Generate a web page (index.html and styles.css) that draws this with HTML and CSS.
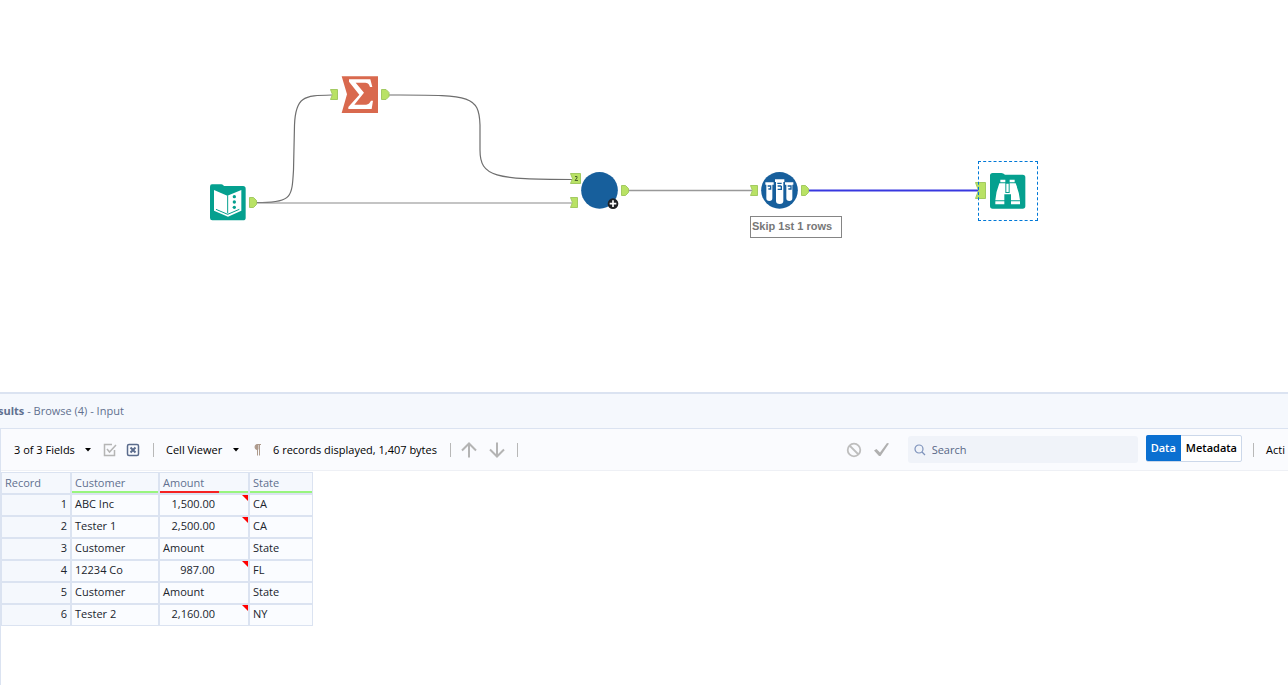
FILE: index.html
```html
<!DOCTYPE html>
<html lang="en">
<head>
<meta charset="utf-8">
<title>Workflow results</title>
<link rel="stylesheet" href="styles.css">
</head>
<body>
<main class="canvas" aria-label="Workflow canvas">
  <svg class="wires" width="1288" height="390" fill="none" stroke="#6e6e6e" stroke-width="1.2">
    <path d="M256 202.500H262C292 202.500 292 196 293.500 170L294.500 125C295.500 97 303 95.500 332 95"/>
    <path d="M388 95H400C470 95 479 96 480 125V150C480 177 495 179.500 572 179.500"/>
    <path d="M256 203H572" stroke="#8a8a8a"/>
    <path d="M628 190.500H752" stroke="#999" stroke-width="1.500"/>
    <path d="M808 190.500H979" stroke="#3838e0" stroke-width="2"/>
  </svg>
  <svg class="wires" width="1288" height="390" fill="#b9e265" stroke="#a3ca62" stroke-width="1">
    <path d="M249.500 197.500h4l3 3v4l-3 3h-4z"/>
    <path d="M330.500 89.500h7v10h-7l2-5z"/>
    <path d="M381.500 89.500h4.500l3 3v4l-3 3h-4.500z"/>
    <path d="M570.500 173.500h10v10h-10l2-5z"/>
    <path d="M570.500 197.500h7v10h-7l2-5z"/>
    <path d="M621.500 185.500h4l3 3v4l-3 3h-4z"/>
    <path d="M750.500 185.500h7v10h-7l2-5z"/>
    <path d="M801.500 185.500h4l3 3v4l-3 3h-4z"/>
    <path d="M975.500 182.500h10v16h-10l3-8z"/>
    <path d="M575 176.500h2v1.500l-2 2.500h3" stroke="#4d652d" fill="none"/>
  </svg>

  <svg class="node input" viewBox="27 39 114 114" width="38" height="38" role="img" aria-label="Text input">
    <path fill="#05a08f" d="M36 43h28q5 0 8 5l3 0h54q8 0 8 8v88q0 7-8 7H37q-7 0-7-7V50q0-7 6-7z"/>
    <path fill="#fff" d="M42 60 82 77 124 60V122L84 140 42 122z"/>
    <g fill="none" stroke="#05a08f"><path stroke-width="3" d="M83 76V130M48 118 83 133 118 118"/></g>
    <g fill="#05a08f"><circle cx="103" cy="80" r="5"/><circle cx="103" cy="96" r="5"/><circle cx="103" cy="112" r="5"/></g>
  </svg>
  <svg class="node summarize" viewBox="63 30 114 114" width="38" height="38" role="img" aria-label="Summarize">
    <path fill="#d9694e" d="M65 34H174V144H65L81 88z"/>
    <path fill="#fff" d="M87 43H151L157 66H150C147 56 144 53 132 53H107L132 83 103 119H134C146 119 149 114 153 107H159L155 132H85V126L118 89 87 50z"/>
  </svg>
  <svg class="node union" viewBox="60 33 117 117" width="39" height="39" role="img" aria-label="Union">
    <circle cx="118.500" cy="91" r="55" fill="#175f9c"/>
    <circle cx="159" cy="131" r="16" fill="#202124"/>
    <path d="M149 131H169M159 121V141" stroke="#fff" stroke-width="5"/>
  </svg>
  <svg class="node sample" viewBox="60 33 117 117" width="39" height="39" role="img" aria-label="Sample">
    <circle cx="118.500" cy="91" r="55" fill="#175f9c"/>
    <g fill="#fff">
      <path d="M76 67H101V74H97V115Q97 123 88 123T79 115V74H76z"/>
      <path d="M105 58H133V66H130V123Q130 132 119 132T108 123V66H105z"/>
      <path d="M135 67H160V74H157V115Q157 123 148 123T139 115V74H135z"/>
    </g>
    <g fill="none" stroke="#175f9c" stroke-width="4">
      <path d="M83 78H92V87H85M112 70H125M113 78H124M113 88H124V78M143 78H153V87H145"/>
    </g>
  </svg>
  <p class="annotation">Skip 1st 1 rows</p>
  <div class="selection">
    <svg viewBox="72 64 114 114" width="38" height="38" role="img" aria-label="Browse">
      <path fill="#05a08f" d="M83 67H109Q115 67 120 72H173Q181 72 181 80V167Q181 174 173 174H83Q75 174 75 166V75Q75 67 83 67z"/>
      <g fill="#fff">
        <path d="M106 87H121V95H106zM134 87H149V95H134z"/>
        <path d="M103 98H121V127H134V98H152Q163 126 165 149H138V131H118V149H91Q93 123 103 98z"/>
        <path d="M91 152H118V161H91zM138 152H165V161H138zM124 99H131V124H124z"/>
      </g>
    </svg>
  </div>
</main>

<section class="results">
  <header class="title"><strong>sults</strong> <span>- Browse (4) - Input</span></header>
  <div class="panel">
    <div class="toolbar">
      <div class="group">
        <label class="pick"><select aria-label="Fields"><option>3 of 3 Fields</option></select><svg width="6" height="4" viewBox="0 0 6 4"><path d="M0 0h6L3 3.500z"/></svg></label>
        <button class="icon" aria-label="Select all"><svg width="14" height="14" viewBox="0 0 14 14" fill="none" stroke="#b5b5b5" stroke-width="1.500"><path d="M9 1.500H1.500v11h10V7M4 6l2.500 3L13 2"/></svg></button>
        <button class="icon" aria-label="Deselect all"><svg width="14" height="14" viewBox="0 0 14 14" fill="none" stroke="#5a6b8c"><rect x="1.500" y="1.500" width="11" height="11" rx="1.500" stroke-width="1.500"/><path stroke-width="2" d="m4.500 4.500 5 5m0-5-5 5"/></svg></button>
        <i class="rule"></i>
        <label class="pick viewer"><select aria-label="Viewer"><option>Cell Viewer</option></select><svg width="6" height="4" viewBox="0 0 6 4"><path d="M0 0h6L3 3.500z"/></svg></label>
        <button class="icon pilcrow" aria-label="Show whitespace"><svg width="7" height="12" viewBox="0 0 7 12" fill="none" stroke="#ad9a8c"><path fill="#ad9a8c" d="M4 .5H3a2 2.500 0 0 0 0 5h1z"/><path d="M3.500 1v10.500M5.500 1v10.500M3 .5h4"/></svg></button>
        <span class="count">6 records displayed, 1,407 bytes</span>
        <i class="rule"></i>
        <button class="icon" aria-label="Previous"><svg width="16" height="16" viewBox="0 0 16 16" fill="none" stroke="#b4b4b4" stroke-width="2"><path d="M8 15.500V1.500M1 8.500l7-7 7 7"/></svg></button>
        <button class="icon next" aria-label="Next"><svg width="16" height="16" viewBox="0 0 16 16" fill="none" stroke="#b4b4b4" stroke-width="2"><path d="M8 .5v14M1 7.500l7 7 7-7"/></svg></button>
        <i class="rule"></i>
      </div>
      <div class="group tools">
        <button class="icon" aria-label="Discard"><svg width="16" height="16" viewBox="0 0 16 16" fill="none" stroke="#bebebe" stroke-width="1.800"><circle cx="8" cy="8" r="6.300"/><path d="m3.500 3.500 9 9"/></svg></button>
        <button class="icon apply" aria-label="Apply"><svg width="16" height="16" viewBox="0 0 16 16"><path fill="#b0b0b0" d="M0 8.500 2.500 7 6 10.500 13 1l2 .5L6.500 14H5z"/></svg></button>
        <label class="search"><svg width="12" height="12" viewBox="0 0 12 12" fill="none" stroke="#7d92bb" stroke-width="1.200"><circle cx="5" cy="5" r="4"/><path d="m8 8 3 3"/></svg><input type="search" placeholder="Search" aria-label="Search"></label>
        <div class="tabs"><button class="active">Data</button><button>Metadata</button></div>
        <i class="rule"></i>
        <button class="actions">Acti</button>
      </div>
    </div>
    <table class="grid">
      <thead><tr><th class="record">Record</th><th class="customer">Customer</th><th class="amount">Amount</th><th class="state">State</th></tr></thead>
      <tbody>
        <tr><td>1</td><td>ABC Inc</td><td class="flag">&nbsp;&nbsp; 1,500.00</td><td>CA</td></tr>
        <tr><td>2</td><td>Tester 1</td><td class="flag">&nbsp;&nbsp; 2,500.00</td><td>CA</td></tr>
        <tr><td>3</td><td>Customer</td><td>Amount</td><td>State</td></tr>
        <tr><td>4</td><td>12234 Co</td><td class="flag">&nbsp;&nbsp;&nbsp;&nbsp;&nbsp; 987.00</td><td>FL</td></tr>
        <tr><td>5</td><td>Customer</td><td>Amount</td><td>State</td></tr>
        <tr><td>6</td><td>Tester 2</td><td class="flag">&nbsp;&nbsp; 2,160.00</td><td>NY</td></tr>
      </tbody>
    </table>
  </div>
</section>
</body>
</html>
```
FILE: styles.css
```css
* { box-sizing: border-box; }
body {
  margin: 0;
  min-height: 100vh;
  display: flex;
  flex-direction: column;
  background: #fff;
  color: #000;
  font: 11px/16px "Open Sans", "Noto Sans", sans-serif;
}
button, input, select { font: inherit; color: inherit; border: 0; padding: 0; margin: 0; background: none; }
svg { display: block; flex: none; }

.canvas { position: relative; flex: 1; overflow: hidden; }
.wires, .node, .annotation, .selection { position: absolute; }
.wires { left: 0; top: 0; }
.input { left: 209px; top: 183px; }
.summarize { left: 341px; top: 75px; }
.union { left: 580px; top: 171px; }
.sample { left: 760px; top: 171px; }
.annotation {
  left: 750px;
  top: 216px;
  width: 92px;
  margin: 0;
  padding: 1px 1px 3px;
  border: 1px solid #858585;
  color: #777;
  font: bold 11px/16px "Liberation Sans", Arial, sans-serif;
  white-space: nowrap;
}
.selection { left: 978px; top: 161px; padding: 10px; border: 1px dashed #0078d7; }

.results { border-top: 2px solid #dbe3f1; background: #f5f8fd; }
.title { padding: 9px 0; color: #61708f; white-space: nowrap; overflow: hidden; }
.title strong { margin-left: -2px; }
.panel { border-top: 1px solid #dbe3f1; border-left: 1px solid #dbe3f1; background: #fff; padding-bottom: 59px; }
.toolbar {
  display: flex;
  justify-content: space-between;
  height: 42px;
  margin-bottom: 1px;
  border-bottom: 1px solid #eef0f5;
  background: #fafbfe;
  white-space: nowrap;
  overflow: hidden;
}
.group { display: flex; align-items: center; padding-left: 13px; }
.pick { display: flex; align-items: center; gap: 10px; margin-right: 12px; }
.pick select { appearance: none; }
.icon { margin-right: 9px; }
.rule { width: 1px; height: 14px; margin-right: 12px; margin-left: 4px; background: #b8b8b8; }
.viewer { margin-right: 15px; }
.pilcrow { margin-right: 12px; }
.count { margin-right: 9px; }
.count + .rule { margin-right: 10px; }
.count ~ .icon { margin-right: 12px; }
.count ~ .next { margin-right: 8px; }
.tools { padding-left: 0; }
.tools .icon { margin-right: 12px; }
.tools .apply { margin-right: 18px; }
.search {
  display: flex;
  align-items: center;
  gap: 6px;
  width: 230px;
  height: 27px;
  margin-right: 8px;
  padding: 0 6px;
  border-radius: 3px;
  background: #f0f3f9;
}
.search input { flex: 1; min-width: 0; outline: 0; }
.search input::placeholder { color: #586786; opacity: 1; }
.tabs { display: flex; height: 27px; margin-right: 7px; margin-bottom: 3px; border: 1px solid #ccd8ea; border-radius: 2px; background: #fff; font-weight: 600; }
.tabs button { padding: 0 4px 0 5px; }
.tabs .active { margin: -1px 0 0 -1px; padding: 0 5px; background: #0b70d1; color: #fff; border-radius: 2px 0 0 2px; }
.actions { width: 22px; text-align: left; }

.grid { border-collapse: separate; border-spacing: 0; table-layout: fixed; width: 312px; color: #20242c; }
.grid th, .grid td { position: relative; height: 22px; padding: 0 3px; border: 1px solid #dbe3f1; background: #fafcff; text-align: left; line-height: 18px; }
.grid td { padding-bottom: 2px; }
.grid th { background: #f5f8fd; color: #61708f; font-weight: 400; }
.grid td:first-child { background: #f5f8fd; text-align: right; }
.record { width: 70px; }
.customer { width: 88px; }
.amount { width: 90px; }
.state { width: 64px; }
.grid .customer, .grid .state { background: linear-gradient(#98f57e, #98f57e) bottom / 100% 2px no-repeat #f5f8fd; }
.grid .amount { background: linear-gradient(90deg, #f52222 67%, #98f57e 67%) bottom / 100% 2px no-repeat #f5f8fd; }
.flag::after { content: ""; position: absolute; top: 0; right: 0; border-top: 6px solid #f00; border-left: 6px solid transparent; }
```
